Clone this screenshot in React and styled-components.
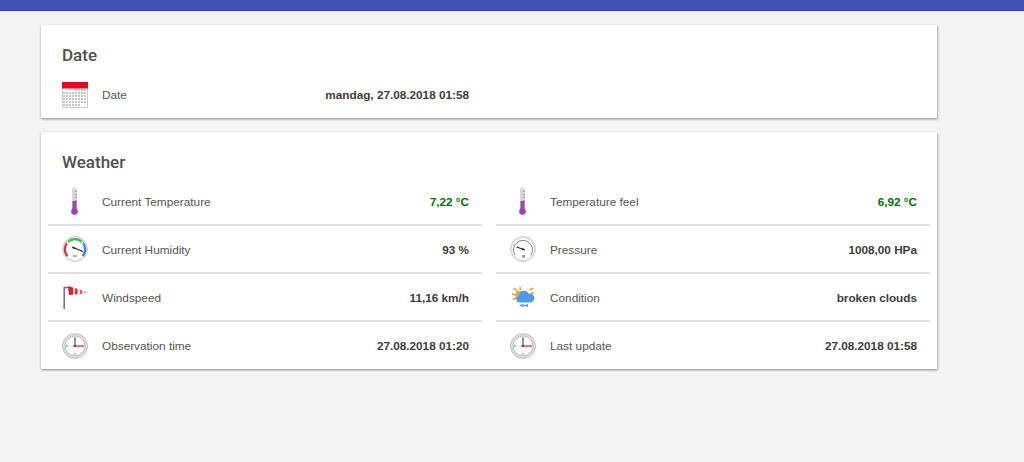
import styled, { createGlobalStyle } from 'styled-components'

const GlobalStyle = createGlobalStyle`
  html, body {
    margin: 0;
    padding: 0;
    background: #f4f4f4;
  }
  body {
    font-family: "Liberation Sans", Arial, sans-serif;
    color: #444;
  }
`

const CalendarIcon = () => (
  <svg width="26" height="26" viewBox="0 0 26 26">
    <rect x="0.5" y="0.5" width="25" height="25" fill="#fbfbfb" stroke="#cdcdcd" />
    <rect x="0" y="0" width="26" height="6.5" fill="#dc0a22" />
    <g fill="#c6c6c6">
      {[8, 11, 14, 17, 20, 23].map(y =>
        [2, 5, 8, 11, 14, 17, 20, 23].map(x =>
          (y === 8 && x < 14) || (y === 23 && x > 17) ? null : (
            <rect key={`${x}-${y}`} x={x - 1} y={y - 1} width="2" height="2" />
          )
        )
      )}
    </g>
  </svg>
)

const ThermometerIcon = () => (
  <svg width="26" height="28" viewBox="0 0 26 28">
    <path d="M10 3 a2.5 2.5 0 0 1 5 0 V22 H10 Z" fill="#d6d6d6" />
    <rect x="10.5" y="14" width="4" height="9" fill="#9b45ad" />
    <circle cx="12.5" cy="24.5" r="3.3" fill="#9b45ad" />
    <g fill="#9a9a9a">
      <rect x="13" y="4" width="2" height="1" />
      <rect x="13" y="7" width="2" height="1" />
      <rect x="13" y="10" width="2" height="1" />
      <rect x="13" y="13" width="2" height="1" />
    </g>
  </svg>
)

const HumidityIcon = () => (
  <svg width="26" height="26" viewBox="0 0 26 26">
    <circle cx="13" cy="13" r="12.5" fill="#e4e4e4" stroke="#cfcfcf" />
    <circle cx="13" cy="13" r="10.8" fill="#fff" />
    <path d="M5.5 20 A10 10 0 0 1 5 7" fill="none" stroke="#d9333a" strokeWidth="2.2" />
    <path d="M6 6 A10 10 0 0 1 20 6" fill="none" stroke="#43b85a" strokeWidth="2.2" />
    <path d="M21 7 A10 10 0 0 1 20.5 20" fill="none" stroke="#3583d8" strokeWidth="2.2" />
    <path d="M10 11 L21 15.5" stroke="#222" strokeWidth="1.2" />
    <circle cx="12" cy="12" r="1" fill="#222" />
    <rect x="11" y="19" width="4" height="2" fill="#b5b5b5" />
  </svg>
)

const PressureIcon = () => (
  <svg width="26" height="26" viewBox="0 0 26 26">
    <circle cx="13" cy="13" r="12.5" fill="#e4e4e4" stroke="#cfcfcf" />
    <circle cx="13" cy="13" r="10.8" fill="#fff" />
    <path d="M5 19 A9.5 9.5 0 1 1 21 19" fill="none" stroke="#666" strokeWidth="0.8" />
    <path d="M6.7 11 L15 14" stroke="#222" strokeWidth="1.3" />
    <circle cx="13" cy="13.3" r="1" fill="#222" />
    <rect x="12" y="19" width="3" height="3" fill="#a5a5a5" />
  </svg>
)

const WindsockIcon = () => (
  <svg width="26" height="26" viewBox="0 0 26 26">
    <path d="M2.2 25 V3.5 H7" fill="none" stroke="#6b7380" strokeWidth="1.5" />
    <path d="M6 2 L26 8 L26 9.5 L7 11 Z" fill="#f8dcdc" />
    <path d="M6 2 L11 3.5 L11 10.7 L7 11 Z" fill="#cf2530" />
    <path d="M13 4.1 L15.5 4.9 L15.5 10.2 L13 10.4 Z" fill="#d6343c" />
    <path d="M18 5.6 L20 6.2 L20 9.8 L18 10 Z" fill="#e0595e" />
    <path d="M22.5 7 L24 7.4 L24 9.5 L22.5 9.6 Z" fill="#eda6a8" />
  </svg>
)

const ClockIcon = () => (
  <svg width="26" height="26" viewBox="0 0 26 26">
    <circle cx="13" cy="13" r="12.5" fill="#dedede" stroke="#c2c2c2" />
    <circle cx="13" cy="13" r="10" fill="#fff" stroke="#adadad" strokeWidth="0.8" />
    <g fill="#777">
      <rect x="12.5" y="4" width="1" height="2" />
      <rect x="12.5" y="20" width="1" height="2" />
      <rect x="4" y="12.5" width="2" height="1" />
      <rect x="20" y="12.5" width="2" height="1" />
    </g>
    <path d="M13 13 V5" stroke="#555" strokeWidth="1.2" />
    <path d="M11 13 H21" stroke="#b8323c" strokeWidth="1.2" />
    <circle cx="13" cy="13" r="1.2" fill="#a3323a" />
  </svg>
)

const ConditionIcon = () => (
  <svg width="26" height="26" viewBox="0 0 26 26">
    <g stroke="#f29a2e" strokeWidth="1.6">
      <path d="M4 4 L8 8" />
      <path d="M2 10 L6 11" />
      <path d="M3 15.5 L7 13.5" />
      <path d="M10 3 L10.5 6" />
      <path d="M20 6 L23 4" />
      <path d="M21 9 L24 9" />
      <path d="M20 12 L23 13" />
    </g>
    <circle cx="9" cy="10.5" r="3.5" fill="#f6a63c" />
    <path d="M9.5 18.5 a3.5 3.5 0 0 1 -0.8-6.8 a5.4 5.4 0 0 1 10.2-2 a4.5 4.5 0 0 1 2 8.8 Z" fill="#4f9be8" />
    <path d="M9 21.5 Q12 19.5 15 21 L18 20 V23 L15 22 Q12 23.5 9 21.5 Z" fill="#5a9fe4" />
  </svg>
)

const Page = styled.div`
  min-height: 462px;
`

const TopBar = styled.div`
  height: 11px;
  background: #3f51b5;
  border-bottom: 1px solid #36469f;
  box-sizing: border-box;
`

const Content = styled.main`
  width: 896px;
  margin-left: 41px;
  padding-top: 14px;
  display: flex;
  flex-direction: column;
  gap: 14px;
`

const Card = styled.section`
  background: #fff;
  box-shadow: 0 1px 2px rgba(0, 0, 0, 0.3), 1px 1px 3px rgba(0, 0, 0, 0.18);
  padding: 0 7px;
`

const Title = styled.h2`
  margin: 0;
  height: 46px;
  padding: 21px 0 0 14px;
  box-sizing: border-box;
  font-family: Roboto, "Liberation Sans", sans-serif;
  font-size: 17px;
  line-height: 18px;
  font-weight: 500;
  color: #505050;
`

const Grid = styled.div`
  display: grid;
  grid-template-columns: 434px 434px;
  column-gap: 14px;
`

const Row = styled.div`
  height: ${p => (p.$last ? 47 : 48)}px;
  box-sizing: border-box;
  padding: ${p => (p.$last ? 1 : 0)}px 13px 0 14px;
  display: flex;
  align-items: center;
  border-bottom: ${p => (p.$last ? 'none' : '2px solid #e0e0e0')};

  & > span {
    padding-top: ${p => (p.$last ? 0 : 1)}px;
    margin-bottom: ${p => (p.$last ? 1 : 0)}px;
  }
`

const IconBox = styled.div`
  width: 26px;
  height: 28px;
  flex: none;
  margin-right: 14px;
  display: flex;
  align-items: center;
  justify-content: center;
`

const Label = styled.span`
  flex: 1;
  font-size: 11.8px;
  line-height: 14px;
  color: #555;
`

const Value = styled.span`
  font-size: 11.75px;
  line-height: 14px;
  font-weight: 700;
  color: ${p => p.$color || '#3c3c3c'};
`

const rows = [
  { icon: <ThermometerIcon />, label: 'Current Temperature', value: '7,22 °C', color: '#0b6b0b' },
  { icon: <ThermometerIcon />, label: 'Temperature feel', value: '6,92 °C', color: '#0b6b0b' },
  { icon: <HumidityIcon />, label: 'Current Humidity', value: '93 %' },
  { icon: <PressureIcon />, label: 'Pressure', value: '1008,00 HPa' },
  { icon: <WindsockIcon />, label: 'Windspeed', value: '11,16 km/h' },
  { icon: <ConditionIcon />, label: 'Condition', value: 'broken clouds' },
  { icon: <ClockIcon />, label: 'Observation time', value: '27.08.2018 01:20' },
  { icon: <ClockIcon />, label: 'Last update', value: '27.08.2018 01:58' },
]

export default function App() {
  return (
    <Page>
      <GlobalStyle />
      <TopBar />
      <Content>
        <Card>
          <Title>Date</Title>
          <Grid>
            <Row $last>
              <IconBox><CalendarIcon /></IconBox>
              <Label>Date</Label>
              <Value>mandag, 27.08.2018 01:58</Value>
            </Row>
          </Grid>
        </Card>
        <Card>
          <Title>Weather</Title>
          <Grid>
            {rows.map((r, i) => (
              <Row key={r.label} $last={i >= rows.length - 2}>
                <IconBox>{r.icon}</IconBox>
                <Label>{r.label}</Label>
                <Value $color={r.color}>{r.value}</Value>
              </Row>
            ))}
          </Grid>
        </Card>
      </Content>
    </Page>
  )
}
